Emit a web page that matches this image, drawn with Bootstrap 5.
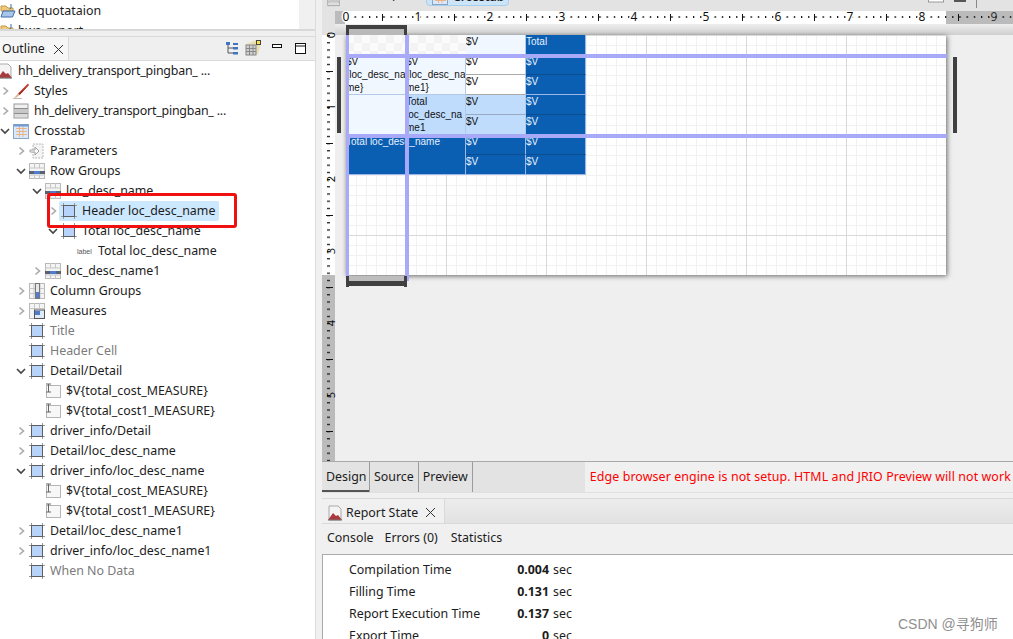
<!doctype html>
<html lang="en"><head><meta charset="utf-8"><title>Report editor</title>
<link href="https://cdn.jsdelivr.net/npm/bootstrap@5.3.0/dist/css/bootstrap.min.css" rel="stylesheet">
<style>
html,body{height:639px;overflow:hidden}
body{width:1013px;background:#f0f0f0;font-family:"Noto Sans","Noto Sans CJK SC",sans-serif;font-size:12.4px;color:#1c1c1c;line-height:20px;position:relative}
.left{width:316px;border-right:1px solid #dcdcdc}
.filebox{height:31px;background:#fff;border-bottom:2px solid #d8d8d8;overflow:hidden}
.filelist{width:300px;margin-top:1px}
.filerow{height:20px}
.filetxt{margin-left:2px}
.filetrack{width:16px;background:#f0f0f0}
.gap6{height:5px}
.viewbar{height:25px;background:#efefef;border-top:1px solid #d9d9d9;border-bottom:1px solid #d9d9d9}
.viewtab{width:69px;background:#f6f6f6;border-right:1px solid #d9d9d9;padding:2px 0 0 2px}
.viewtools{padding-right:9px}
.vt1{margin-right:7px}.vt2{margin-right:11px}.vt3{margin-right:13px}
.tree{background:#fff;height:579px;overflow:hidden}
.node{height:20px;white-space:nowrap}
.l0{margin-left:-16px}.l1{margin-left:0}.l2{margin-left:16px}.l3{margin-left:32px}.l4{margin-left:48px}.l5{margin-left:64px}
.chev{width:13px;height:20px;flex:none}
.ic{width:16px;height:16px;flex:none}
.txt{margin-left:5px}
.tight{letter-spacing:-.21px}
.muted-node{color:#7b7b7b}
.sel{background:#cce8ff;border-radius:2px;height:20px;width:160px;margin-left:-2px;padding-left:2px}
.right{width:691px;min-width:0}
.edtop{height:11px;background:#e3e3e3;overflow:hidden;position:relative}
.edtab{height:18px}
.tabmain{width:99px;padding-left:5px;margin-top:-15px;gap:5px}
.tabmain svg{margin-top:12px;width:13px}
.tabcross{width:83px;margin-top:-12px;margin-left:5px;padding-left:5px;background:#cce4f7;border:1px solid #a5cfee;border-radius:0 0 4px 4px;gap:5px;font-weight:600;font-size:12px}
.edtools{gap:10px;padding-right:13px;margin-top:-3px}
.rulerh{height:13px;background:#fff;display:block}
.canvas{height:437px;position:relative;background:#efefef;overflow:hidden}
.canvas-top{position:absolute;left:13px;right:0;top:0;height:11px;background:linear-gradient(#eee,#cfcfcf)}
.rulerv{position:absolute;left:0;top:0;display:block;overflow:visible}
.sheet{position:absolute;left:24px;top:11px;width:600px;height:240px;background-color:#fff;box-shadow:1px 1px 5px #666;
background-image:linear-gradient(90deg,#d9d9d9 1px,transparent 1px),linear-gradient(#d9d9d9 1px,transparent 1px),linear-gradient(90deg,#f1f1f1 1px,transparent 1px),linear-gradient(#f1f1f1 1px,transparent 1px);
background-size:100px 100px,100px 100px,10px 10px,10px 10px}
.xt{display:grid;grid-template-columns:repeat(4,60px);grid-template-rows:repeat(7,20px);font-family:"Liberation Sans",sans-serif;font-size:10px;line-height:13px;color:#111;position:absolute;left:0;top:0}
.xt>div{overflow:hidden;border-right:1px solid #b3c9e8;border-bottom:1px solid #b3c9e8;white-space:nowrap}
.xt .none{background:#f9f9f9 repeating-conic-gradient(#f3f3f3 0 25%,#fbfbfb 0 50%) 0 0/16px 16px;border-color:transparent}
.xt .lt{background:#f0f7ff}.xt .wh{background:#fff;border-bottom-color:#aaa}
.xt .md{background:#bfdcfd;border-bottom-color:#98a9c4}
.xt .dk{background:#0a5fb2;color:#e8f0ff;border-color:#9db8e6}
.xt .dk2{border-bottom-color:#0c4d8f}
.xt .c2{grid-column:span 2}.xt .r2{grid-row:span 2}
.band{position:absolute;background:#a9a9f9}
.bh1{left:24px;top:30px;width:601px;height:4px}
.bh2{left:24px;top:110px;width:601px;height:4px}
.bv1{left:24px;top:11px;width:3px;height:246px}
.bv2{left:83px;top:11px;width:4px;height:246px}
.hd{position:absolute;background:#404040}
.hd-top{left:24px;top:1px;width:61px;height:10px;background:#b9b9b9;border:solid #404040;border-width:4px 3px 0}
.hd-bot{left:24px;top:252px;width:61px;height:11px;background:transparent;border:solid #404040;border-width:0 3px;}
.hd-bot::before{content:"";position:absolute;left:0;right:0;top:5px;height:5px;background:#404040}
.hd-bot::after{content:"";position:absolute;left:0;right:0;top:0;height:5px;background:#bdbdbd}
.hd-l{left:15px;top:33px;width:4px;height:76px}
.hd-r{left:631px;top:33px;width:4px;height:76px}
.ptabs{height:32px;border-top:1px solid #a8a8a8;border-bottom:1px solid #e0e0e0;overflow:hidden}
.ptab{background:#e3e3e3;border-right:1px solid #9b9b9b;padding:5px 4px 0 4px;height:30px;flex:none}
.ptab.on{box-shadow:inset 0 -2px 0 #555;width:48px}
.pfill{width:112px;flex:none;background:#e3e3e3}
.warn{color:#f00;margin-left:5px;padding-top:5px;white-space:nowrap;letter-spacing:.1px;flex:none}
.gap5{height:5px}
.rbar{height:26px;border-top:1px solid #d9d9d9;border-bottom:1px solid #d9d9d9;background:linear-gradient(#ececec,#e2e2e2)}
.rtab{width:123px;background:#f0f0f0;border-right:1px solid #d9d9d9;padding:3px 0 0 5px;gap:3px}
.rclose{margin-left:3px}
.rsub{height:31px;gap:11px;padding:0 0 2px 5px;border-bottom:1px solid #aaa}
.rlast{margin-left:2px}
.stats{background:#fff;border-left:1px solid #aaa;height:84px;overflow:hidden;padding:4px 0 0 26px}
.stat{height:22px;line-height:22px}
.stat b{display:block;width:200px;text-align:right;font-weight:700}
.stat .lab{width:0;white-space:nowrap;overflow:visible}
.wm{position:absolute;left:898px;top:614px;font-size:14px;color:#8f8f8f;white-space:nowrap;font-family:"Liberation Sans","Noto Sans CJK SC",sans-serif}
.redbox{position:absolute;left:47px;top:193px;width:190px;height:35px;border:3px solid #f01010;border-radius:3px;pointer-events:none}
</style></head>
<body>
<svg width="0" height="0" class="position-absolute">
<defs>
<symbol id="cr" viewBox="0 0 13 20"><path d="M3.500 6.500l4 3.500-4 3.500" fill="none" stroke="#a9a9a9" stroke-width="1.600"/></symbol>
<symbol id="cd" viewBox="0 0 13 20"><path d="M1 8l4 4 4-4" fill="none" stroke="#444" stroke-width="1.600"/></symbol>
<symbol id="close" viewBox="0 0 11 11"><path d="M1 1l9 9M10 1l-9 9" stroke="#333" stroke-width="1" fill="none"/></symbol>
<symbol id="report" viewBox="0 0 16 16"><path d="M2 1h9l3 3v11H2z" fill="#f4f4f4" stroke="#aaa"/><path d="M1 15l5-7 3 3 2-1 4 5z" fill="#a83a3e"/><path d="M1 15h14" stroke="#777"/></symbol>
<symbol id="pencil" viewBox="0 0 16 16"><path d="M15 .5L5 10.500l1.500 1.500L16 2z" fill="#c83a34"/><path d="M16 2L6.500 12l-1-1z" fill="#8c2722"/><path d="M5 10.500l1.500 1.500-3 2.500L1 15z" fill="#d9b48e"/><path d="M0 15.500h9" stroke="#bbb"/></symbol>
<symbol id="ds" viewBox="0 0 16 16"><rect x="1" y="1" width="14" height="14" fill="#f0f0f0" stroke="#999"/><path d="M1 5.500h14M1 10.500h14" stroke="#8d8d8d"/><rect x="2" y="6" width="12" height="4" fill="#c8c8c8"/><rect x="2" y="11" width="12" height="3" fill="#dcdcdc"/></symbol>
<symbol id="xt" viewBox="0 0 16 16"><rect x=".5" y="1.500" width="15" height="14" fill="#d9e9fb" stroke="#8aa5c4"/><path d="M3 5.500h11M3 8.500h11M3 11.500h11M6.500 3v11M10 3v11" stroke="#f0a770" stroke-width=".8"/><path d="M1 2.500h14" stroke="#6f9bd1" stroke-width="2"/></symbol>
<symbol id="param" viewBox="0 0 16 16"><path d="M4 1h10v14H4z" fill="#f4f4f4" stroke="#b8b8b8" stroke-dasharray="2 1"/><path d="M1 7h5V4l4 4-4 4V9H1z" fill="#fff" stroke="#a0a0a0"/></symbol>
<symbol id="rowg" viewBox="0 0 16 16"><rect x=".5" y=".5" width="15" height="15" fill="#f4f4f4" stroke="#b9b9b9"/><path d="M0 5h16M0 12h16M5.500 0v5M10.500 0v5M5.500 12v4M10.500 12v4" stroke="#c5c5c5"/><rect x="0" y="8" width="16" height="3" fill="#5a6270"/><rect x="5" y="8" width="6" height="3" fill="#4d7cd0"/></symbol>
<symbol id="colg" viewBox="0 0 16 16"><rect x=".5" y=".5" width="15" height="15" fill="#f4f4f4" stroke="#b9b9b9"/><path d="M0 5.500h16M0 10.500h16M5 0v16M11 0v16" stroke="#c5c5c5"/><rect x="6.500" y=".5" width="4" height="15" fill="#e8e8e8" stroke="#777"/><rect x="7" y="9" width="3" height="6" fill="#4d7cd0"/></symbol>
<symbol id="meas" viewBox="0 0 16 16"><rect x=".5" y=".5" width="15" height="15" fill="#f4f4f4" stroke="#b9b9b9"/><path d="M0 5.500h16M5.500 0v16M10.500 0v6" stroke="#c5c5c5"/><rect x="5.500" y="7" width="10" height="8.500" fill="#dfe9f7" stroke="#555"/><rect x="6" y="8" width="5" height="4" fill="#4d7cd0"/></symbol>
<symbol id="cell" viewBox="0 0 16 16"><path d="M0 2.500h16M0 13.500h16M2.500 0v16M13.500 0v16" stroke="#999"/><rect x="3" y="3" width="10" height="10" fill="#b8d3f9"/><rect x="2.500" y="2.500" width="11" height="11" fill="none" stroke="#222" stroke-dasharray="1 1"/></symbol>
<symbol id="field" viewBox="0 0 16 16"><rect x="1.500" y="2.500" width="14" height="12" fill="#f7f7f7" stroke="#b5b5b5"/><path d="M1 1h5M3.500 1v8M1 9h5" stroke="#666"/></symbol>
<symbol id="folder" viewBox="0 0 16 16"><path d="M1 3h5l2 2h5v3H1z" fill="#f2c877" stroke="#c29a4b"/><path d="M1 14l2-6h12l-2.500 6z" fill="#a8c5ea" stroke="#3f6fa8"/><path d="M11 1v4l-1.500 1" fill="none" stroke="#3f6fa8"/></symbol>
<pattern id="dh" patternUnits="userSpaceOnUse" x="11" width="7.200" height="13"><rect x="0" y="5" width="1.200" height="2" fill="#111"/></pattern>
<pattern id="tv" patternUnits="userSpaceOnUse" y="11" width="13" height="7.200"><rect x="5" y="0" width="3" height="1.200" fill="#111"/></pattern>
</defs></svg>

<div class="d-flex" style="height:639px">
<div class="left flex-shrink-0 d-flex flex-column">
 <div class="filebox d-flex">
  <div class="filelist flex-grow-1">
   <div class="filerow d-flex align-items-center"><svg class="ic"><use href="#folder"/></svg><span class="filetxt">cb_quotataion</span></div>
   <div class="filerow d-flex align-items-center"><svg class="ic"><use href="#folder"/></svg><span class="filetxt">bws_report</span></div>
  </div>
  <div class="filetrack"></div>
 </div>
 <div class="gap6"></div>
 <div class="viewbar d-flex justify-content-between">
  <div class="viewtab d-flex align-items-center">Outline<svg class="ms-2" width="11" height="11"><use href="#close"/></svg></div>
  <div class="viewtools d-flex align-items-center">
   <svg class="vt1" width="12" height="14" viewBox="0 0 12 14"><path d="M2 3v9h5M2 7h5" fill="none" stroke="#555"/><rect x="0" y="1" width="4" height="3" fill="#3f76c4"/><rect x="7" y="2" width="5" height="2" fill="#3f76c4"/><rect x="7" y="6" width="5" height="2.500" fill="#3f76c4"/><rect x="7" y="11" width="5" height="2.500" fill="#3f76c4"/></svg>
   <svg class="vt2" width="16" height="16" viewBox="0 0 16 16"><path d="M4 3L11 0h5v4l-3 10H1V4z" fill="#e8dfb5"/><rect x="1" y="5" width="10" height="10" fill="#cfcfcf" stroke="#888"/><path d="M1 8.500h10M1 11.500h10M4.500 5v10M8 5v10" stroke="#888"/><rect x="11" y="0" width="5" height="5" fill="#444"/><rect x="12" y="1" width="3" height="3" fill="#ffe14d"/></svg>
   <svg class="vt3" width="10" height="11" viewBox="0 0 10 11"><rect x=".5" y="1.500" width="9" height="3" fill="#fff" stroke="#111"/></svg>
   <svg width="11" height="11" viewBox="0 0 11 11"><rect x=".5" y=".5" width="10" height="10" fill="#fff" stroke="#111"/><path d="M0 3h11" stroke="#111"/></svg>
  </div>
 </div>
 <div class="tree">
  <div class="node l0 d-flex align-items-center"><span class="chev"></span><svg class="ic"><use href="#report"/></svg><span class="txt tight">hh_delivery_transport_pingban_ ...</span></div>
  <div class="node l1 d-flex align-items-center"><svg class="chev"><use href="#cr"/></svg><svg class="ic"><use href="#pencil"/></svg><span class="txt">Styles</span></div>
  <div class="node l1 d-flex align-items-center"><svg class="chev"><use href="#cr"/></svg><svg class="ic"><use href="#ds"/></svg><span class="txt tight">hh_delivery_transport_pingban_ ...</span></div>
  <div class="node l1 d-flex align-items-center"><svg class="chev"><use href="#cd"/></svg><svg class="ic"><use href="#xt"/></svg><span class="txt">Crosstab</span></div>
  <div class="node l2 d-flex align-items-center"><svg class="chev"><use href="#cr"/></svg><svg class="ic"><use href="#param"/></svg><span class="txt">Parameters</span></div>
  <div class="node l2 d-flex align-items-center"><svg class="chev"><use href="#cd"/></svg><svg class="ic"><use href="#rowg"/></svg><span class="txt">Row Groups</span></div>
  <div class="node l3 d-flex align-items-center"><svg class="chev"><use href="#cd"/></svg><svg class="ic"><use href="#rowg"/></svg><span class="txt">loc_desc_name</span></div>
  <div class="node l4 d-flex align-items-center"><svg class="chev"><use href="#cr"/></svg><span class="sel d-flex align-items-center"><svg class="ic"><use href="#cell"/></svg><span class="txt">Header loc_desc_name</span></span></div>
  <div class="node l4 d-flex align-items-center"><svg class="chev"><use href="#cd"/></svg><svg class="ic"><use href="#cell"/></svg><span class="txt">Total loc_desc_name</span></div>
  <div class="node l5 d-flex align-items-center"><span class="chev"></span><svg class="ic" viewBox="0 0 16 16"><text x="0" y="11" font-size="7" font-family="Liberation Sans" fill="#555">label</text></svg><span class="txt">Total loc_desc_name</span></div>
  <div class="node l3 d-flex align-items-center"><svg class="chev"><use href="#cr"/></svg><svg class="ic"><use href="#rowg"/></svg><span class="txt">loc_desc_name1</span></div>
  <div class="node l2 d-flex align-items-center"><svg class="chev"><use href="#cr"/></svg><svg class="ic"><use href="#colg"/></svg><span class="txt">Column Groups</span></div>
  <div class="node l2 d-flex align-items-center"><svg class="chev"><use href="#cr"/></svg><svg class="ic"><use href="#meas"/></svg><span class="txt">Measures</span></div>
  <div class="node l2 d-flex align-items-center muted-node"><span class="chev"></span><svg class="ic"><use href="#cell"/></svg><span class="txt">Title</span></div>
  <div class="node l2 d-flex align-items-center muted-node"><span class="chev"></span><svg class="ic"><use href="#cell"/></svg><span class="txt">Header Cell</span></div>
  <div class="node l2 d-flex align-items-center"><svg class="chev"><use href="#cd"/></svg><svg class="ic"><use href="#cell"/></svg><span class="txt">Detail/Detail</span></div>
  <div class="node l3 d-flex align-items-center"><span class="chev"></span><svg class="ic"><use href="#field"/></svg><span class="txt">$V{total_cost_MEASURE}</span></div>
  <div class="node l3 d-flex align-items-center"><span class="chev"></span><svg class="ic"><use href="#field"/></svg><span class="txt">$V{total_cost1_MEASURE}</span></div>
  <div class="node l2 d-flex align-items-center"><svg class="chev"><use href="#cr"/></svg><svg class="ic"><use href="#cell"/></svg><span class="txt">driver_info/Detail</span></div>
  <div class="node l2 d-flex align-items-center"><svg class="chev"><use href="#cr"/></svg><svg class="ic"><use href="#cell"/></svg><span class="txt">Detail/loc_desc_name</span></div>
  <div class="node l2 d-flex align-items-center"><svg class="chev"><use href="#cd"/></svg><svg class="ic"><use href="#cell"/></svg><span class="txt">driver_info/loc_desc_name</span></div>
  <div class="node l3 d-flex align-items-center"><span class="chev"></span><svg class="ic"><use href="#field"/></svg><span class="txt">$V{total_cost_MEASURE}</span></div>
  <div class="node l3 d-flex align-items-center"><span class="chev"></span><svg class="ic"><use href="#field"/></svg><span class="txt">$V{total_cost1_MEASURE}</span></div>
  <div class="node l2 d-flex align-items-center"><svg class="chev"><use href="#cr"/></svg><svg class="ic"><use href="#cell"/></svg><span class="txt">Detail/loc_desc_name1</span></div>
  <div class="node l2 d-flex align-items-center"><svg class="chev"><use href="#cr"/></svg><svg class="ic"><use href="#cell"/></svg><span class="txt">driver_info/loc_desc_name1</span></div>
  <div class="node l2 d-flex align-items-center muted-node"><span class="chev"></span><svg class="ic"><use href="#cell"/></svg><span class="txt">When No Data</span></div>
 </div>
</div>
<div style="width:6px" class="flex-shrink-0"></div>
<div class="right flex-shrink-0 d-flex flex-column">
 <div class="edtop d-flex justify-content-between">
  <div class="d-flex">
   <div class="edtab tabmain d-flex align-items-center"><svg class="ic"><use href="#ds"/></svg>Main Report</div>
   <div class="edtab tabcross d-flex align-items-center"><svg class="ic"><use href="#xt"/></svg>Crosstab</div>
  </div>
  <div class="edtools d-flex align-items-start">
   <svg width="16" height="6" viewBox="0 0 16 6"><rect x=".5" y="-3" width="15" height="8" fill="#fff" stroke="#999"/></svg>
   <svg width="12" height="6" viewBox="0 0 12 6"><rect width="12" height="5" fill="#555"/></svg>
   <svg width="24" height="14" viewBox="0 0 24 14"><path d="M.5 0v11" stroke="#888"/><rect x="22" y="0" width="2" height="3" fill="#d9772d"/></svg>
  </div>
 </div>
 <svg class="rulerh" width="691" height="13" viewBox="0 0 691 13" font-family="Noto Sans" font-size="12" text-anchor="middle" fill="#111" paint-order="stroke" stroke-linejoin="round">
  <rect x="13" width="611" height="13" fill="#fff"/>
  <rect width="13" height="13" fill="#e3e3e3"/>
  <rect x="13" width="10" height="13" fill="#bbb"/>
  <rect x="624" width="67" height="13" fill="#bbb"/>
  <rect x="24" width="667" height="13" fill="url(#dh)"/>
  <path d="M60.500 3v7M132.500 3v7M204.500 3v7M276.500 3v7M348.500 3v7M420.500 3v7M492.500 3v7M564.500 3v7M636.500 3v7" stroke="#111"/>
  <g stroke="#fff" stroke-width="3"><text x="24" y="10">0</text><text x="96" y="10">1</text><text x="168" y="10">2</text><text x="240" y="10">3</text><text x="312" y="10">4</text><text x="384" y="10">5</text><text x="456" y="10">6</text><text x="528" y="10">7</text><text x="600" y="10">8</text></g>
  <text x="672" y="10" fill="#333">9</text>
 </svg>
 <div class="canvas">
  <div class="canvas-top"></div>
  <svg class="rulerv" width="13" height="437" viewBox="0 0 13 437" font-family="Noto Sans" font-size="11" text-anchor="middle" fill="#111">
   <rect width="13" height="11" fill="#e3e3e3"/>
   <rect y="11" width="13" height="240" fill="#fff"/>
   <rect y="251" width="13" height="186" fill="#bbb"/>
   <rect y="11" width="13" height="426" fill="url(#tv)"/>
   <path d="M4 47.500h7M4 119.500h7M4 191.500h7M4 263.500h7M4 335.500h7M4 407.500h7" stroke="#111"/>
   <g fill="#111">
   <text transform="translate(13 11) rotate(-90)">0</text>
   <text transform="translate(13 83) rotate(-90)">1</text>
   <text transform="translate(13 155) rotate(-90)">2</text>
   <text transform="translate(13 227) rotate(-90)">3</text>
   <text transform="translate(13 299) rotate(-90)">4</text>
   <text transform="translate(13 371) rotate(-90)">5</text>
   </g>
  </svg>
  <div class="sheet">
   <div class="xt">
    <div class="none c2"></div><div class="lt">$V</div><div class="dk">Total</div>
    <div class="lt r2">$V<br>{loc_desc_na<br>me}</div><div class="lt r2">$V<br>{loc_desc_na<br>me1}</div><div class="wh">$V</div><div class="dk dk2">$V</div>
    <div class="wh">$V</div><div class="dk">$V</div>
    <div class="lt r2"></div><div class="md r2">Total<br>loc_desc_na<br>me1</div><div class="md">$V</div><div class="dk dk2">$V</div>
    <div class="md">$V</div><div class="dk">$V</div>
    <div class="dk c2 r2">Total loc_desc_name</div><div class="dk dk2">$V</div><div class="dk dk2">$V</div>
    <div class="dk">$V</div><div class="dk">$V</div>
   </div>
  </div>
  <div class="band bh1"></div><div class="band bh2"></div><div class="band bv1"></div><div class="band bv2"></div>
  <div class="hd hd-top"></div><div class="hd hd-bot"></div><div class="hd hd-l"></div><div class="hd hd-r"></div>
 </div>
 <div class="ptabs d-flex">
  <div class="ptab on">Design</div><div class="ptab">Source</div><div class="ptab">Preview</div>
  <div class="pfill"></div>
  <div class="warn">Edge browser engine is not setup. HTML and JRIO Preview will not work</div>
 </div>
 <div class="gap5"></div>
 <div class="rbar d-flex">
  <div class="rtab d-flex align-items-center"><svg class="ic"><use href="#report"/></svg>Report State<svg class="ms-1 rclose" width="11" height="11"><use href="#close"/></svg></div>
 </div>
 <div class="rsub d-flex align-items-center"><span>Console</span><span>Errors (0)</span><span class="rlast">Statistics</span></div>
 <div class="stats">
  <div class="stat d-flex"><span class="lab">Compilation Time</span><b>0.004</b><span class="ms-1">sec</span></div>
  <div class="stat d-flex"><span class="lab">Filling Time</span><b>0.131</b><span class="ms-1">sec</span></div>
  <div class="stat d-flex"><span class="lab">Report Execution Time</span><b>0.137</b><span class="ms-1">sec</span></div>
  <div class="stat d-flex"><span class="lab">Export Time</span><b>0</b><span class="ms-1">sec</span></div>
 </div>
</div>
</div>
<div class="redbox"></div>
<div class="wm">CSDN @寻狗师</div>
<script src="https://cdn.jsdelivr.net/npm/bootstrap@5.3.0/dist/js/bootstrap.bundle.min.js"></script>
</body></html>
